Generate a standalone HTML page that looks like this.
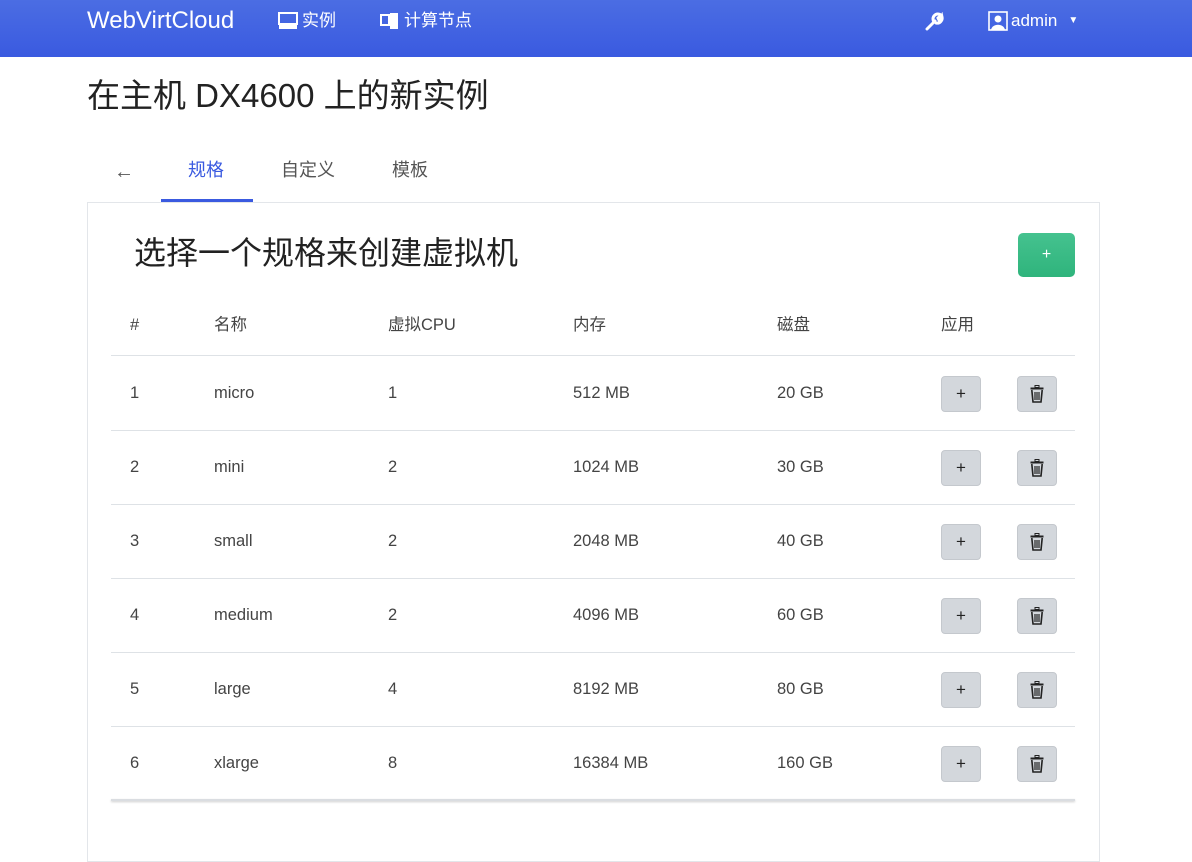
<!DOCTYPE html>
<html><head><meta charset="utf-8"><style>
*{box-sizing:border-box;margin:0;padding:0}
body{width:1192px;height:839px;overflow:hidden;background:#fff;font-family:"Liberation Sans","Noto Sans CJK SC",sans-serif;color:#333;position:relative}
.nav{position:absolute;left:0;top:0;width:1192px;height:57px;background:linear-gradient(#4b6de3,#3a5ae0);color:#fff}
.nav .a{position:absolute;top:9px;font-size:17px;line-height:24px;display:flex;align-items:center;gap:4px}
.abs{position:absolute}
.tab{position:absolute;top:158px;font-size:18px;line-height:24px;color:#555}
.card{position:absolute;left:87px;top:202px;width:1013px;height:660px;border:1px solid #e3e6ea}
.th,.td{position:absolute;font-size:16.5px;line-height:20px;color:#444}
.hr{position:absolute;left:111px;width:964px;height:1px;background:#dee2e6}
.btn{position:absolute;width:40px;height:36px;background:#d3d7dc;border:1px solid #c4c8cd;border-radius:4px;display:flex;align-items:center;justify-content:center;font-size:17px;color:#222}
</style></head><body>
<div class="nav">
<div class="a" style="left:87px;top:6px;font-size:24px;line-height:30px">WebVirtCloud</div>
<div class="a" style="left:278px"><svg width="20" height="18" viewBox="0 0 20 18"><rect x="1" y="1" width="18" height="11" fill="none" stroke="#fff" stroke-width="2"/><rect x="1" y="13" width="18" height="4" fill="#fff"/></svg>实例</div>
<div class="a" style="left:380px"><svg width="20" height="18" viewBox="0 0 20 18"><rect x="1" y="3" width="8" height="10" fill="none" stroke="#fff" stroke-width="2"/><rect x="10" y="1" width="8" height="16" fill="#fff"/></svg>计算节点</div>
<div class="a" style="left:924px;top:12px"><svg width="20" height="20" viewBox="0 0 20 20"><path d="M3 17 L11 9 M10 10 A5 5 0 0 1 17 3 L14 6 L15 8 L17 8 L18 5 A5 5 0 0 1 12 11" stroke="#fff" stroke-width="3" fill="none" stroke-linecap="round"/></svg></div>
<div class="a" style="left:988px;gap:3px"><svg width="20" height="20" viewBox="0 0 20 20"><rect x="1" y="1" width="18" height="18" fill="none" stroke="#fff" stroke-width="1.6"/><circle cx="10" cy="8" r="3.5" fill="#fff"/><path d="M3 19 C4 12 16 12 17 19Z" fill="#fff"/></svg>admin<span style="font-size:10px;margin-left:8px">▼</span></div>
</div>
<div class="abs" style="left:87px;top:75px;font-size:33px;line-height:42px;color:#222">在主机 DX4600 上的新实例</div>
<div class="tab" style="left:114px;font-size:20px;top:160px">←</div>
<div class="tab" style="left:188px;color:#3a5ae0">规格</div>
<div class="abs" style="left:161px;top:199px;width:92px;height:3px;background:#3a5ae0"></div>
<div class="tab" style="left:281px">自定义</div>
<div class="tab" style="left:392px">模板</div>
<div class="card"></div>
<div class="abs" style="left:134px;top:232px;font-size:32px;line-height:42px;color:#222">选择一个规格来创建虚拟机</div>
<div class="abs" style="left:1018px;top:233px;width:57px;height:44px;border-radius:5px;background:linear-gradient(#45c28f,#2fb47c);color:#fff;font-size:16px;display:flex;align-items:center;justify-content:center">+</div>
<div class="th" style="left:130px;top:315px">#</div>
<div class="th" style="left:214px;top:315px">名称</div>
<div class="th" style="left:388px;top:315px">虚拟CPU</div>
<div class="th" style="left:573px;top:315px">内存</div>
<div class="th" style="left:777px;top:315px">磁盘</div>
<div class="th" style="left:941px;top:315px">应用</div>
<div class="hr" style="top:355px"></div>
<div id="rows"></div>
<div class="hr" style="top:799px;height:2px;background:#dadde1;box-shadow:0 1px 2px #ccc"></div>
<script>
var d=[["1","micro","1","512 MB","20 GB"],["2","mini","2","1024 MB","30 GB"],["3","small","2","2048 MB","40 GB"],["4","medium","2","4096 MB","60 GB"],["5","large","4","8192 MB","80 GB"],["6","xlarge","8","16384 MB","160 GB"]];
var xs=[130,214,388,573,777],h="";
var trash='<svg width="14" height="18" viewBox="0 0 14 18"><rect x="0.5" y="2.5" width="13" height="2" fill="#222"/><rect x="5" y="0.5" width="4" height="2" fill="none" stroke="#222"/><path d="M1.8 5 L3 17 H11 L12.2 5" fill="none" stroke="#222" stroke-width="1.6"/><path d="M5 7v8M7 7v8M9 7v8" stroke="#222" stroke-width="1.2"/></svg>';
d.forEach(function(r,i){var y=356+i*74;r.forEach(function(c,j){h+='<div class="td" style="left:'+xs[j]+'px;top:'+(y+27)+'px">'+c+'</div>'});
h+='<div class="btn" style="left:941px;top:'+(y+20)+'px">+</div><div class="btn" style="left:1017px;top:'+(y+20)+'px">'+trash+'</div>';
if(i<5)h+='<div class="hr" style="top:'+(y+74)+'px"></div>';});
document.getElementById("rows").innerHTML=h;
</script>
</body></html>
